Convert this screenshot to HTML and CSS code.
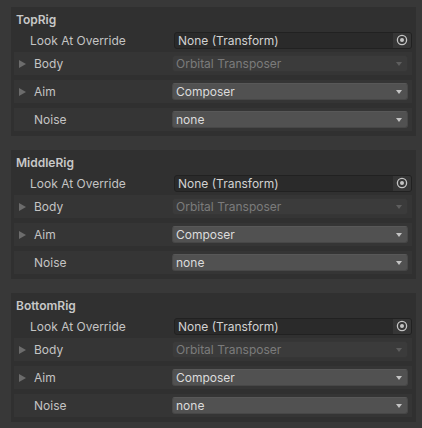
FILE: index.html
```html
<!DOCTYPE html>
<html lang="en">
<head>
    <meta charset="UTF-8">
    <meta name="viewport" content="width=device-width, initial-scale=1.0">
    <title>Rig Inspector</title>
    <link rel="stylesheet" href="styles.css">
</head>
<body>
    <div class="inspector">
        <div class="rig">
            <div class="rig-title">TopRig</div>
            <div class="object-row">
                <span class="label">Look At Override</span>
                <div class="object-field">
                    <span>None (Transform)</span>
                    <span class="picker"><svg width="12" height="12" viewBox="0 0 12 12"><circle cx="6" cy="6" r="4.6" fill="none" stroke="#c4c4c4" stroke-width="1.3"/><circle cx="6" cy="6" r="2" fill="#c4c4c4"/></svg></span>
                </div>
            </div>
            <div class="band">
                <span class="foldout"></span>
                <span class="label">Body</span>
                <div class="dropdown disabled">Orbital Transposer<span class="arrow"></span></div>
            </div>
            <div class="band">
                <span class="foldout"></span>
                <span class="label">Aim</span>
                <div class="dropdown">Composer<span class="arrow"></span></div>
            </div>
            <div class="band">
                <span class="foldout hidden"></span>
                <span class="label">Noise</span>
                <div class="dropdown">none<span class="arrow"></span></div>
            </div>
        </div>

        <div class="rig">
            <div class="rig-title">MiddleRig</div>
            <div class="object-row">
                <span class="label">Look At Override</span>
                <div class="object-field">
                    <span>None (Transform)</span>
                    <span class="picker"><svg width="12" height="12" viewBox="0 0 12 12"><circle cx="6" cy="6" r="4.6" fill="none" stroke="#c4c4c4" stroke-width="1.3"/><circle cx="6" cy="6" r="2" fill="#c4c4c4"/></svg></span>
                </div>
            </div>
            <div class="band">
                <span class="foldout"></span>
                <span class="label">Body</span>
                <div class="dropdown disabled">Orbital Transposer<span class="arrow"></span></div>
            </div>
            <div class="band">
                <span class="foldout"></span>
                <span class="label">Aim</span>
                <div class="dropdown">Composer<span class="arrow"></span></div>
            </div>
            <div class="band">
                <span class="foldout hidden"></span>
                <span class="label">Noise</span>
                <div class="dropdown">none<span class="arrow"></span></div>
            </div>
        </div>

        <div class="rig">
            <div class="rig-title">BottomRig</div>
            <div class="object-row">
                <span class="label">Look At Override</span>
                <div class="object-field">
                    <span>None (Transform)</span>
                    <span class="picker"><svg width="12" height="12" viewBox="0 0 12 12"><circle cx="6" cy="6" r="4.6" fill="none" stroke="#c4c4c4" stroke-width="1.3"/><circle cx="6" cy="6" r="2" fill="#c4c4c4"/></svg></span>
                </div>
            </div>
            <div class="band">
                <span class="foldout"></span>
                <span class="label">Body</span>
                <div class="dropdown disabled">Orbital Transposer<span class="arrow"></span></div>
            </div>
            <div class="band">
                <span class="foldout"></span>
                <span class="label">Aim</span>
                <div class="dropdown">Composer<span class="arrow"></span></div>
            </div>
            <div class="band">
                <span class="foldout hidden"></span>
                <span class="label">Noise</span>
                <div class="dropdown">none<span class="arrow"></span></div>
            </div>
        </div>
    </div>
</body>
</html>
```

FILE: styles.css
```css
body {
    margin: 0;
    background-color: #383838;
    font-family: Inter, "Noto Sans", sans-serif;
    font-size: 12px;
    color: #c4c4c4;
}
.inspector {
    padding: 7px 6px 0 11px;
    display: flex;
    flex-direction: column;
    gap: 14px;
}
.rig {
    background-color: #303030;
    padding: 0 4px 5px 3px;
    display: flex;
    flex-direction: column;
}
.rig-title {
    height: 24px;
    line-height: 25px;
    padding-left: 2px;
    font-weight: 600;
    color: #c8c8c8;
}
.object-row {
    height: 18px;
    margin-bottom: 3px;
    display: flex;
    align-items: center;
}
.object-row .label {
    width: 160px;
    padding-left: 16px;
    box-sizing: border-box;
}
.object-field {
    flex: 1;
    height: 17px;
    box-sizing: border-box;
    background-color: #2a2a2a;
    border: 1px solid #212121;
    border-radius: 3px;
    display: flex;
    align-items: center;
    justify-content: space-between;
    padding-left: 3px;
    color: #d2d2d2;
}
.picker {
    width: 18px;
    height: 15px;
    background-color: #363636;
    border-radius: 0 2px 2px 0;
    display: flex;
    align-items: center;
    justify-content: center;
}
.band {
    height: 23px;
    margin-bottom: 5px;
    background-color: #353535;
    display: flex;
    align-items: center;
}
.band:last-child {
    margin-bottom: 0;
}
.foldout {
    width: 0;
    height: 0;
    margin-left: 5px;
    margin-right: 8px;
    border-top: 4px solid transparent;
    border-bottom: 4px solid transparent;
    border-left: 7px solid #6c6c6c;
}
.foldout.hidden {
    border-left-color: transparent;
}
.band .label {
    width: 138px;
}
.dropdown {
    flex: 1;
    margin-right: 4px;
    height: 17px;
    box-sizing: border-box;
    background-color: #515151;
    border: 1px solid #474747;
    border-top-color: #585858;
    border-radius: 3px;
    padding-left: 3px;
    color: #dcdcdc;
    display: flex;
    align-items: center;
    justify-content: space-between;
}
.arrow {
    width: 0;
    height: 0;
    margin-right: 5px;
    border-left: 3.5px solid transparent;
    border-right: 3.5px solid transparent;
    border-top: 4px solid #c4c4c4;
}
.dropdown.disabled {
    background-color: #3b3b3b;
    border-color: #363636;
    color: #7b7b7b;
}
.dropdown.disabled .arrow {
    border-top-color: #5e5e5e;
}
```
